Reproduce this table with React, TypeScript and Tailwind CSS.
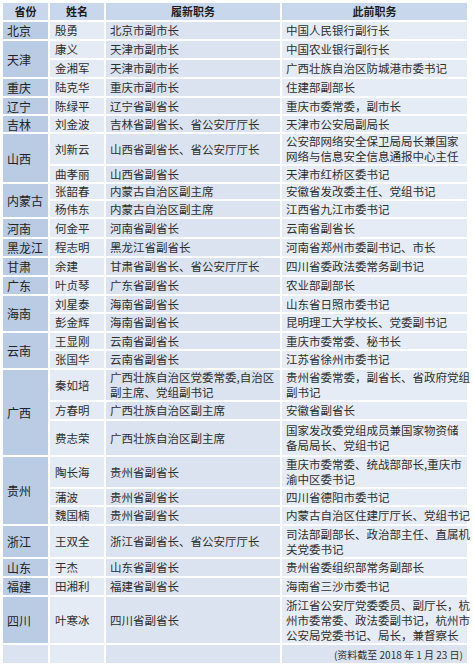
import React from "react";

type Row = { n: string; a: string[]; b: string[]; h: string };
type Group = { p: string; rows: Row[] };

const groups: Group[] = [
  { p: "北京", rows: [{ n: "殷勇", a: ["北京市副市长"], b: ["中国人民银行副行长"], h: "h-[17px]" }] },
  {
    p: "天津",
    rows: [
      { n: "康义", a: ["天津市副市长"], b: ["中国农业银行副行长"], h: "h-[17px]" },
      { n: "金湘军", a: ["天津市副市长"], b: ["广西壮族自治区防城港市委书记"], h: "h-[17px]" },
    ],
  },
  { p: "重庆", rows: [{ n: "陆克华", a: ["重庆市副市长"], b: ["住建部副部长"], h: "h-[17px]" }] },
  { p: "辽宁", rows: [{ n: "陈绿平", a: ["辽宁省副省长"], b: ["重庆市委常委，副市长"], h: "h-[16px]" }] },
  { p: "吉林", rows: [{ n: "刘金波", a: ["吉林省副省长、省公安厅厅长"], b: ["天津市公安局副局长"], h: "h-[16px]" }] },
  {
    p: "山西",
    rows: [
      {
        n: "刘新云",
        a: ["山西省副省长、省公安厅厅长"],
        b: ["公安部网络安全保卫局局长兼国家", "网络与信息安全信息通报中心主任"],
        h: "h-[30px]",
      },
      { n: "曲孝丽", a: ["山西省副省长"], b: ["天津市红桥区委书记"], h: "h-[16px]" },
    ],
  },
  {
    p: "内蒙古",
    rows: [
      { n: "张韶春", a: ["内蒙古自治区副主席"], b: ["安徽省发改委主任、党组书记"], h: "h-[15px]" },
      { n: "杨伟东", a: ["内蒙古自治区副主席"], b: ["江西省九江市委书记"], h: "h-[16px]" },
    ],
  },
  { p: "河南", rows: [{ n: "何金平", a: ["河南省副省长"], b: ["云南省副省长"], h: "h-[18px]" }] },
  { p: "黑龙江", rows: [{ n: "程志明", a: ["黑龙江省副省长"], b: ["河南省郑州市委副书记、市长"], h: "h-[17px]" }] },
  { p: "甘肃", rows: [{ n: "余建", a: ["甘肃省副省长、省公安厅厅长"], b: ["四川省委政法委常务副书记"], h: "h-[17px]" }] },
  { p: "广东", rows: [{ n: "叶贞琴", a: ["广东省副省长"], b: ["农业部副部长"], h: "h-[17px]" }] },
  {
    p: "海南",
    rows: [
      { n: "刘星泰", a: ["海南省副省长"], b: ["山东省日照市委书记"], h: "h-[16px]" },
      { n: "彭金辉", a: ["海南省副省长"], b: ["昆明理工大学校长、党委副书记"], h: "h-[17px]" },
    ],
  },
  {
    p: "云南",
    rows: [
      { n: "王显刚", a: ["云南省副省长"], b: ["重庆市委常委、秘书长"], h: "h-[16px]" },
      { n: "张国华", a: ["云南省副省长"], b: ["江苏省徐州市委书记"], h: "h-[17px]" },
    ],
  },
  {
    p: "广西",
    rows: [
      {
        n: "秦如培",
        a: ["广西壮族自治区党委常委,自治区", "副主席、党组副书记"],
        b: ["贵州省委常委，副省长、省政府党组", "副书记"],
        h: "h-[29px]",
      },
      { n: "方春明", a: ["广西壮族自治区副主席"], b: ["安徽省副省长"], h: "h-[17px]" },
      {
        n: "费志荣",
        a: ["广西壮族自治区副主席"],
        b: ["国家发改委党组成员兼国家物资储", "备局局长、党组书记"],
        h: "h-[34px]",
      },
    ],
  },
  {
    p: "贵州",
    rows: [
      {
        n: "陶长海",
        a: ["贵州省副省长"],
        b: ["重庆市委常委、统战部部长,重庆市", "渝中区委书记"],
        h: "h-[30px]",
      },
      { n: "蒲波", a: ["贵州省副省长"], b: ["四川省德阳市委书记"], h: "h-[16px]" },
      { n: "魏国楠", a: ["贵州省副省长"], b: ["内蒙古自治区住建厅厅长、党组书记"], h: "h-[17px]" },
    ],
  },
  {
    p: "浙江",
    rows: [
      {
        n: "王双全",
        a: ["浙江省副省长、省公安厅厅长"],
        b: ["司法部副部长、政治部主任、直属机", "关党委书记"],
        h: "h-[31px]",
      },
    ],
  },
  { p: "山东", rows: [{ n: "于杰", a: ["山东省副省长"], b: ["贵州省委组织部常务副部长"], h: "h-[17px]" }] },
  { p: "福建", rows: [{ n: "田湘利", a: ["福建省副省长"], b: ["海南省三沙市委书记"], h: "h-[17px]" }] },
  {
    p: "四川",
    rows: [
      {
        n: "叶寒冰",
        a: ["四川省副省长"],
        b: ["浙江省公安厅党委委员、副厅长，杭", "州市委常委、政法委副书记，杭州市", "公安局党委书记、局长，兼督察长"],
        h: "h-[46px]",
      },
    ],
  },
];

const Lines = ({ lines }: { lines: string[] }) => (
  <>
    {lines.map((l, i) => (
      <div key={i} className="whitespace-nowrap">
        {l}
      </div>
    ))}
  </>
);

export default function App() {
  return (
    <div className="w-[474px] h-[667px] bg-white pt-px pl-px font-['Noto_Sans_CJK_SC','Liberation_Sans',sans-serif] text-[#2e2e2e]">
      <table className="table-fixed border-separate border-spacing-[2px] w-[468px] text-[11.5px] leading-[15px]">
        <colgroup>
          <col className="w-[45px]" />
          <col className="w-[54px]" />
          <col className="w-[174px]" />
          <col className="w-[185px]" />
        </colgroup>
        <thead>
          <tr className="bg-[#c8d7eb] text-[11px] font-bold text-[#1c1c1c]">
            <th className="h-[17px] p-0 text-center">省份</th>
            <th className="p-0 text-center">姓名</th>
            <th className="p-0 text-center">履新职务</th>
            <th className="p-0 text-center">此前职务</th>
          </tr>
        </thead>
        <tbody>
          {groups.map((g) =>
            g.rows.map((r, i) => (
              <tr key={g.p + r.n}>
                {i === 0 && (
                  <td rowSpan={g.rows.length} className="bg-[#b9cce4] pl-[4px] pr-0 py-0 align-middle text-[12px] text-[#222]">
                    {g.p}
                  </td>
                )}
                <td className={`${r.h} bg-[#e5ebf4] pl-[5px] pr-0 py-0 align-middle`}>{r.n}</td>
                <td className="bg-[#dae3ef] pl-[4px] pr-0 py-0 align-middle">
                  <Lines lines={r.a} />
                </td>
                <td className="bg-[#e6ecf5] pl-[4px] pr-0 py-0 align-middle">
                  <Lines lines={r.b} />
                </td>
              </tr>
            ))
          )}
          <tr>
            <td className="h-[18px] bg-[#dae3ef] p-0"></td>
            <td className="bg-[#e5ebf4] p-0"></td>
            <td className="bg-[#dae3ef] p-0"></td>
            <td className="bg-[#dae3ef] pr-[4px] py-0 text-right text-[10px] whitespace-nowrap">
              (资料截至 2018 年 1 月 23 日)
            </td>
          </tr>
        </tbody>
      </table>
    </div>
  );
}
